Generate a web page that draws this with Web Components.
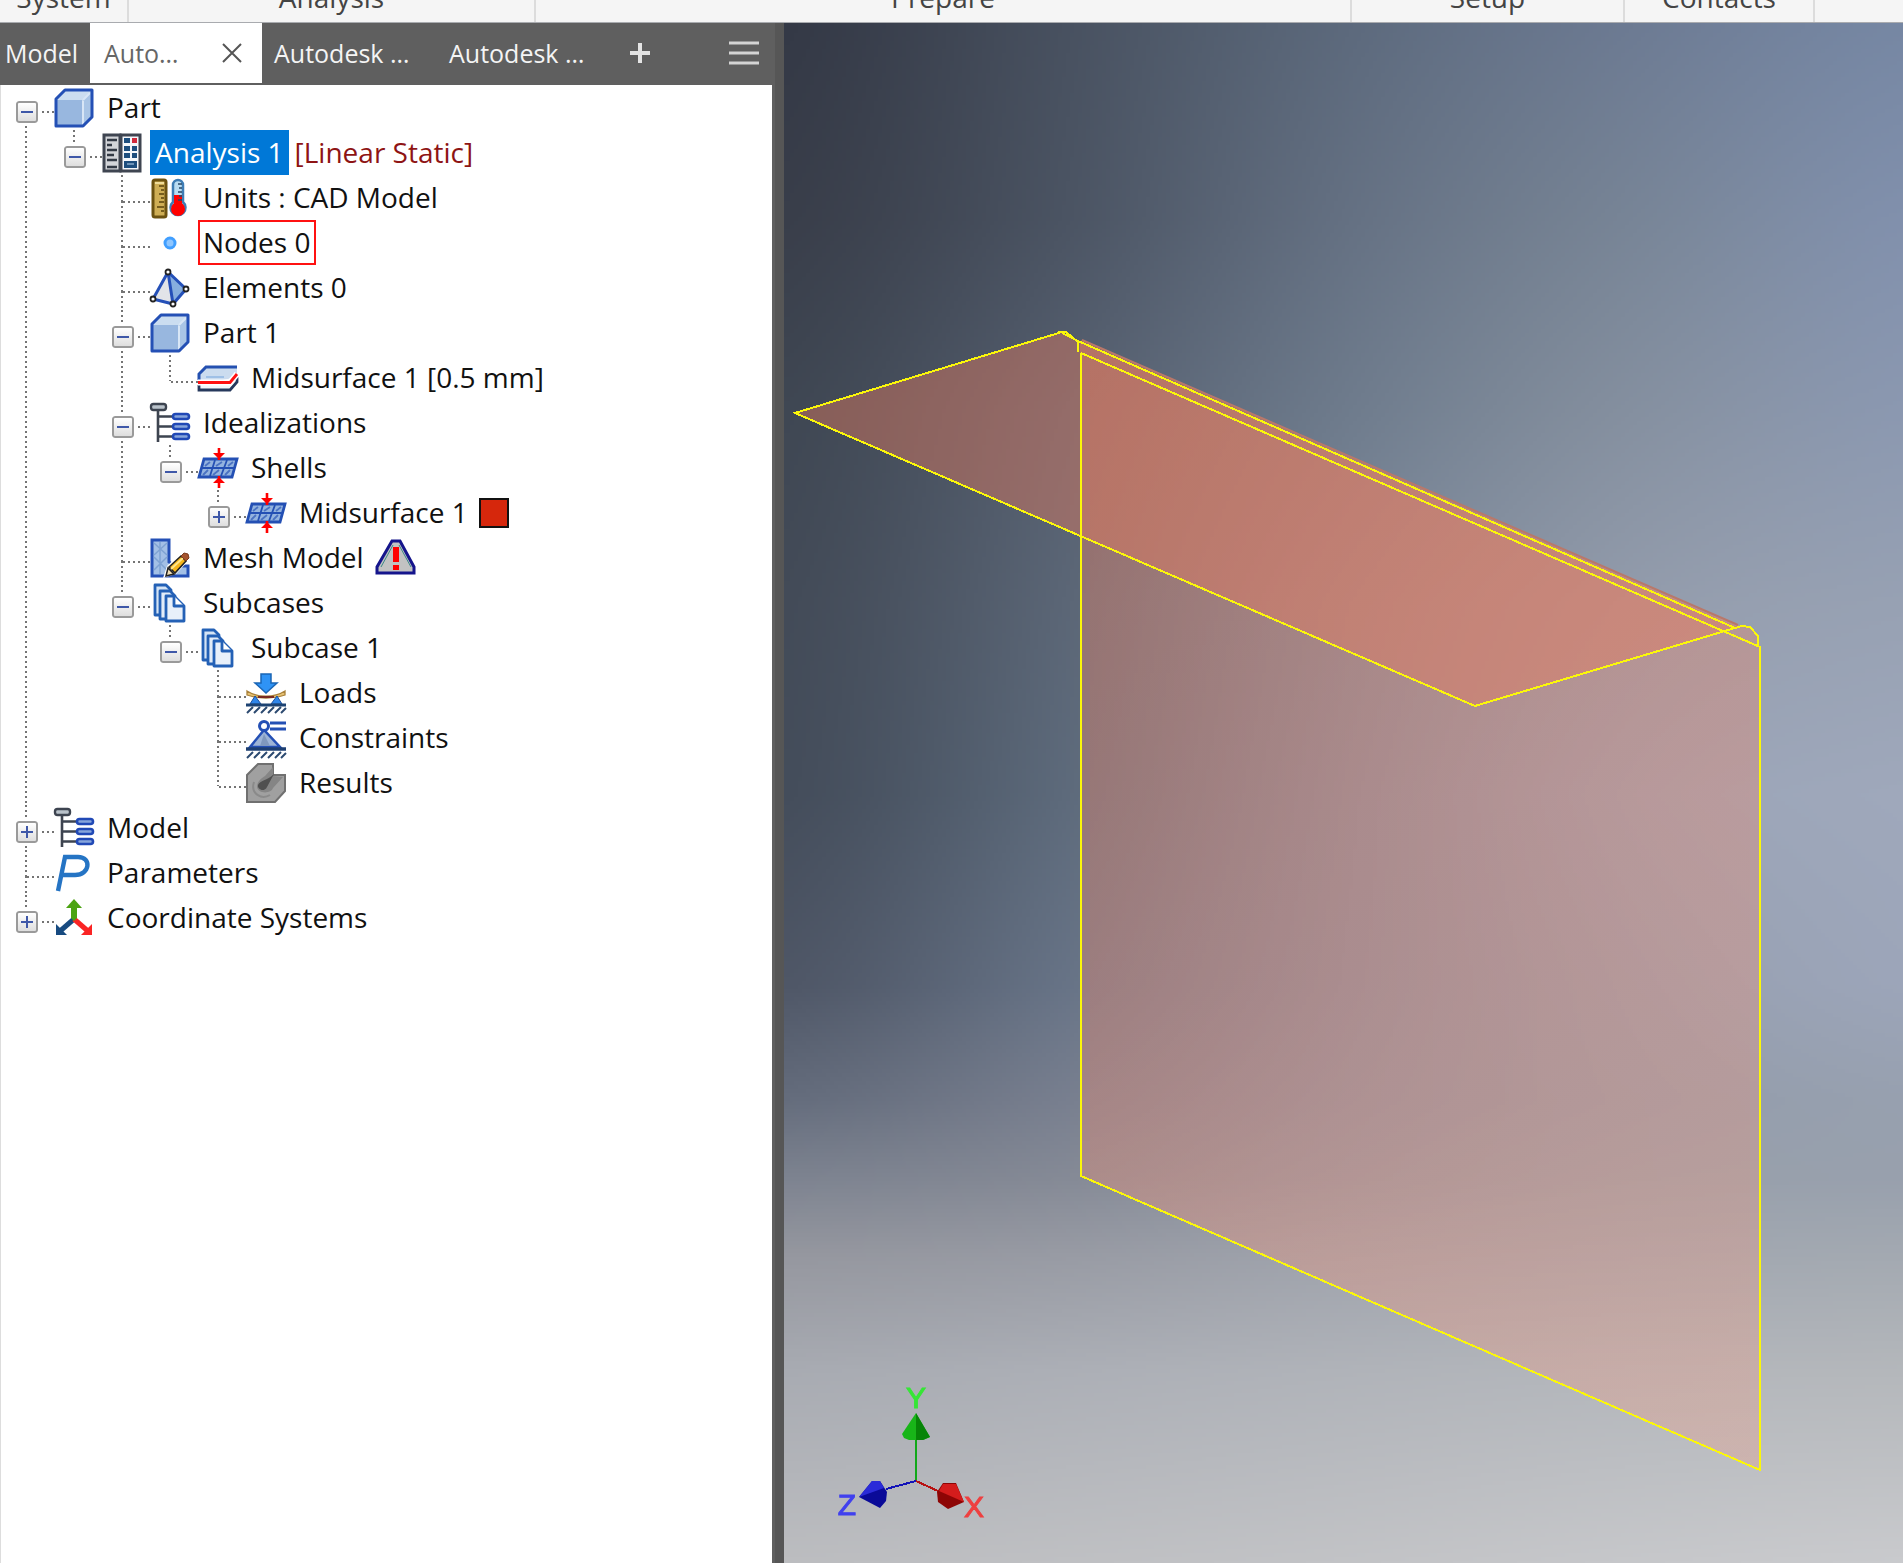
<!DOCTYPE html>
<html lang="en">
<head>
<meta charset="utf-8">
<title>Analysis browser</title>
<style>
  html, body { margin: 0; height: 100%; }
  body { font-family: "Open Sans", "Noto Sans", sans-serif; font-size: 28px; color: #111; background: #fff; overflow: hidden; }
</style>
</head>
<body>
<cad-app>
  <ribbon-strip slot="ribbon"></ribbon-strip>
  <browser-panel slot="panel">
    <tree-item icon="cube" label="Part" open first>
      <tree-item icon="analysis" label="Analysis 1" selected open>
        <span slot="extra" style="color:#8e1414">[Linear Static]</span>
        <tree-item icon="units" label="Units : CAD Model"></tree-item>
        <tree-item icon="node" label="Nodes 0" boxed></tree-item>
        <tree-item icon="tetra" label="Elements 0"></tree-item>
        <tree-item icon="cube" label="Part 1" open>
          <tree-item icon="midsurface" label="Midsurface 1 [0.5 mm]"></tree-item>
        </tree-item>
        <tree-item icon="list" label="Idealizations" open>
          <tree-item icon="shell" label="Shells" open>
            <tree-item icon="shell" label="Midsurface 1" closed>
              <color-chip slot="extra"></color-chip>
            </tree-item>
          </tree-item>
        </tree-item>
        <tree-item icon="mesh" label="Mesh Model">
          <cad-icon slot="extra" name="warning"></cad-icon>
        </tree-item>
        <tree-item icon="docs" label="Subcases" open>
          <tree-item icon="docs" label="Subcase 1" open>
            <tree-item icon="loads" label="Loads"></tree-item>
            <tree-item icon="constraints" label="Constraints"></tree-item>
            <tree-item icon="results" label="Results"></tree-item>
          </tree-item>
        </tree-item>
      </tree-item>
    </tree-item>
    <tree-item icon="list" label="Model" closed></tree-item>
    <tree-item icon="param" label="Parameters"></tree-item>
    <tree-item icon="axes" label="Coordinate Systems" closed></tree-item>
  </browser-panel>
  <model-view slot="view"></model-view>
</cad-app>

<script>
const ICONS = {
  cube: `<path d="M2 11 11 2H38V29L29 38H2Z" fill="#cbddf0"/><path d="M29 12 38 3V29L29 38Z" fill="#a9c5e6"/><path d="M3 12H28V38H3Z" fill="#98b7df"/><path d="M29 13V36M29 12 36 5" stroke="#d8e6f6" stroke-width="2"/><path d="M2 11 11 2H38V29L29 38H2Z" fill="none" stroke="#2450b5" stroke-width="3" stroke-linejoin="round"/>`,
  analysis: `<path d="M2 2H18V38H2Z" fill="#d3d5d9" stroke="#3f4551" stroke-width="3"/><path d="M19 2H38V38H19Z" fill="#f4f7fb" stroke="#3f4551" stroke-width="3"/><path d="M5 7H15M5 12H10M5 17H15M5 22H12M5 27H15M5 34H15" stroke="#333a45" stroke-width="2.5"/><path d="M22 5H28V10H22ZM22 13H28V18H22ZM30 13H35V18H30ZM22 20H28V25H22ZM30 20H35V25H30ZM22 28H35V35H22Z" fill="#1d4e7e"/><path d="M30 5H35V10H30Z" fill="#d02a3c"/><path d="M25 31H32" stroke="#6d93b8" stroke-width="2"/>`,
  units: `<rect x="3" y="2" width="13" height="37" rx="2" fill="#cfae55" stroke="#6c5211" stroke-width="3"/><path d="M5 5H14" stroke="#f0dc9a" stroke-width="2"/><path d="M9 8H14M11 12H14M9 16H14M11 20H14M9 24H14M7 29H14M11 33H14" stroke="#5a430c" stroke-width="1.5"/><path d="M23 7a5 5 0 0 1 10 0V24a7.500 7.500 0 1 1-10 0Z" fill="#b8dcf2" stroke="#3e7db5" stroke-width="2.500"/><circle cx="28" cy="31" r="7" fill="#f00"/><path d="M24 17H32V28H24Z" fill="#f00"/><path d="M28 6H32M29 10H32M28 14H32M29 18H32M28 22H32" stroke="#274566" stroke-width="1.500"/>`,
  node: `<circle cx="20" cy="20" r="5" fill="#8ec6ff" stroke="#419fff" stroke-width="3"/>`,
  tetra: `<path d="M18 4 3 31 23 36Z" fill="#e2e4e8"/><path d="M18 4 36 21 23 36Z" fill="#86aede"/><path d="M18 4 3 31 23 36 36 21Z M18 4 23 36" fill="none" stroke="#2550b8" stroke-width="3"/><g fill="#fff" stroke="#222" stroke-width="1.800"><circle cx="18" cy="4" r="2.500"/><circle cx="3" cy="31" r="2.500"/><circle cx="23" cy="36" r="2.500"/><circle cx="36" cy="21" r="2.500"/></g>`,
  midsurface: `<path d="M1 22V17L9 9H39V15L32 22Z" fill="#cbdcef"/><path d="M1 22V16L8 9H39" fill="none" stroke="#2450b0" stroke-width="3"/><path d="M8 19H26" stroke="#9fc0e6" stroke-width="2"/><path d="M1 27V32H32L39 24V19" fill="#f3f6fa" stroke="#26395c" stroke-width="2.800"/><path d="M0 24.500H32L39 16" fill="none" stroke="#fff" stroke-width="6"/><path d="M0 24.500H32L39 16" fill="none" stroke="#f11" stroke-width="2.800"/>`,
  list: `<path d="M8 6V39M8 13.500H24M8 23.500H24M8 33.500H24" stroke="#3d4450" stroke-width="2.600" fill="none"/><rect x="1" y="1" width="15" height="6" rx="2.500" fill="#b9c2ca" stroke="#3d4450" stroke-width="2.400"/><g fill="#86a5db" stroke="#2149b6" stroke-width="2.600"><rect x="23" y="11" width="16" height="5" rx="2.500"/><rect x="23" y="21" width="16" height="5" rx="2.500"/><rect x="23" y="31" width="16" height="5" rx="2.500"/></g>`,
  shell: `<path d="M6 11H39L34 29H1Z" fill="#93b3df" stroke="#2450b4" stroke-width="2.800"/><path d="M4 20H36M17 12 12 28M29 12 23 28" stroke="#2450b4" stroke-width="1.800"/><path d="M7 18 12 14M18 18 24 14M30 18 35 14M5 27 10 22M15 27 21 22M27 27 32 22" stroke="#4a72c2" stroke-width="1.800"/><path d="M21 0V12M21 40V28" stroke="#f00" stroke-width="2.600"/><path d="M15 5H27L21 11ZM15 35H27L21 29Z" fill="#f00"/>`,
  mesh: `<path d="M2 2H19V24L25 28H38V38H2Z" fill="#a3c0e6" stroke="#2450b6" stroke-width="3"/><path d="M4 5 17 17M17 5 4 17M4 19 17 32M17 19 4 32M10 4V36" stroke="#7fa3d3" stroke-width="1.500"/><path d="M13 40 17 28 33 13 41 20 26 36Z" fill="#fff"/><path d="M16 38 18 30 24 36Z" fill="#f2dfb5" stroke="#222" stroke-width="1.500"/><path d="M19 29 31 18 36 23 25 35Z" fill="#f5b51c" stroke="#222" stroke-width="1.600"/><path d="M21 31 33 20" stroke="#ffe58a" stroke-width="2"/><path d="M31 18 34 15 38 16 39 20 36 23Z" fill="#a5542e" stroke="#7a3a1c"/>`,
  docs: `<g stroke="#2461b6" stroke-width="2.800" stroke-linejoin="round"><path d="M5 2H16L21 7V32H5Z" fill="#d5e4f5"/><path d="M10 8H20L25 13V36H10Z" fill="#e2ecf8"/><path d="M16 13H24L34 23V38H16Z" fill="#e8f0fa"/><path d="M24 13V23H34" fill="#fff"/></g>`,
  warning: `<path d="M17 3H25L39 29V35H2V29Z" fill="#c2c2c2" stroke="#15158c" stroke-width="3"/><path d="M18 7 6 29M24 7 36 29" stroke="#3a8888" stroke-width="1"/><path d="M18 9H24V24H18ZM18 27H24V32H18Z" fill="#f00"/>`,
  loads: `<path d="M15 1H25V10H31L20 20 9 10H15Z" fill="#2f93f5" stroke="#1a65b5" stroke-width="1.500"/><path d="M1 18C12 25 28 25 39 18V22C28 26 12 26 1 22Z" fill="#e6c172" stroke="#a9813a" stroke-width="1.300"/><path d="M12 24H28" stroke="#7a2b22" stroke-width="2"/><path d="M4 31 9 23 15 31ZM25 31 31 23 36 31Z" fill="#2f86ea" stroke="#1a4f9d"/><path d="M0 32H40" stroke="#1d4372" stroke-width="3"/><path d="M1 40 7 34M8 40 14 34M15 40 21 34M22 40 28 34M29 40 35 34M35 40 40 35" stroke="#2c4a70" stroke-width="2"/>`,
  constraints: `<path d="M4 29 18 12 34 29Z" fill="#9db4d6" stroke="#2450b5" stroke-width="2.500"/><path d="M18 16 24 28H14Z" fill="#7f98bd"/><path d="M24 5H40M24 11H40" stroke="#2450b5" stroke-width="2.800"/><circle cx="18" cy="8" r="4.500" fill="#fff" stroke="#2450b5" stroke-width="3"/><path d="M0 31H40" stroke="#1d3f72" stroke-width="3.500"/><path d="M1 40 7 34M8 40 14 34M15 40 21 34M22 40 28 34M29 40 35 34M35 40 40 35" stroke="#2c4a70" stroke-width="2"/>`,
  results: `<path d="M1 12 12 1H27V12H39V28L29 39H1Z" fill="#a0a0a0" stroke="#707070" stroke-width="2"/><path d="M27 4V13L37 14 27 25C25 31 12 31 11 24C11 18 16 15 19 13Z" fill="#858585"/><path d="M28 11 21 24C18 30 11 26 12 22C14 17 21 18 28 11Z" fill="#505050"/><path d="M8 19C4 31 16 37 24 32" fill="none" stroke="#8a8a8a" stroke-width="2"/>`,
  param: `<path d="M4 38 11 4H24C38 4 36 22 21 22H8" fill="none" stroke="#2574c4" stroke-width="4.400"/>`,
  axes: `<path d="M20 21 5 34" stroke="#174a80" stroke-width="5"/><path d="M20 21 35 34" stroke="#fa2424" stroke-width="5"/><path d="M2 26V37H13Z" fill="#174a80"/><path d="M38 26V37H27Z" fill="#fa2424"/><path d="M17 9H23V20L20 23 17 20Z" fill="#4ba312"/><path d="M20 1 28 10H12Z" fill="#4ba312"/>`
};

class CadIcon extends HTMLElement {
  connectedCallback() {
    if (this.shadowRoot) return;
    this.attachShadow({ mode: "open" }).innerHTML = `
      <style>:host{display:block;width:40px;height:40px;flex:none}svg{display:block;overflow:visible}</style>
      <svg width="40" height="40" viewBox="0 0 40 40" fill="none" aria-hidden="true">${ICONS[this.getAttribute("name")]}</svg>`;
  }
}
customElements.define("cad-icon", CadIcon);

class ColorChip extends HTMLElement {
  constructor() {
    super();
    this.attachShadow({ mode: "open" }).innerHTML = `
      <style>:host{display:block;box-sizing:border-box;width:30px;height:30px;border:2px solid #111;background:#d6270c}</style>`;
  }
}
customElements.define("color-chip", ColorChip);

class TreeItem extends HTMLElement {
  connectedCallback() {
    if (this.shadowRoot) return;
    const branch = this.hasAttribute("open") || this.hasAttribute("closed");
    const open = this.hasAttribute("open");
    const label = this.getAttribute("label");
    this.attachShadow({ mode: "open" }).innerHTML = `
      <style>
        :host { display: flex; --dot: #747474; }
        .rail { flex: none; width: 48px; display: grid; grid-template-rows: 26px 1fr; grid-template-columns: 24px 24px; }
        .v { grid-column: 1; width: 2px; justify-self: end; background: repeating-linear-gradient(var(--dot) 0 2px, transparent 2px 5px); }
        .up { grid-row: 1; }
        .down { grid-row: 2; }
        :host([first]) .up, :host(:last-child) .down { visibility: hidden; }
        .h { grid-area: 2 / 2; height: 2px; margin-right: -3px; background: repeating-linear-gradient(90deg, var(--dot) 0 2px, transparent 2px 5px); }
        button { grid-area: 1 / 1 / 3 / 3; align-self: start; justify-self: center; box-sizing: border-box; width: 22px; height: 22px; margin: 16px 0 0; padding: 0;
          border: 2px solid #9a9a9a; border-radius: 3px; outline: 3px solid #fff; background: linear-gradient(#fff, #dedede); display: grid; place-items: center; }
        button svg { display: block; }
        .body { flex: 1; min-width: 0; }
        .row { display: flex; align-items: center; height: 45px; margin-left: 3px; line-height: 45px; white-space: nowrap; }
        .label { box-sizing: border-box; height: 45px; margin: 0 6px 0 8px; padding: 0 5px; }
        :host([selected]) .label { background: #0078d7; color: #fff; }
        :host([boxed]) .label { border: 2px solid #f11; padding: 0 4px 0 3px; line-height: 41px; }
      </style>
      <div class="rail">
        <span class="v up"></span><span class="v down"></span><span class="h"></span>
        ${branch ? `<button type="button" aria-expanded="${open}" aria-label="Toggle ${label}"><svg width="14" height="14"><path d="M1 7H13${open ? "" : "M7 1V13"}" stroke="#3f58a8" stroke-width="2"/></svg></button>` : ""}
      </div>
      <div class="body">
        <div class="row"><cad-icon name="${this.getAttribute("icon")}"></cad-icon><span class="label">${label}</span><slot name="extra"></slot></div>
        <slot></slot>
      </div>`;
  }
}
customElements.define("tree-item", TreeItem);

class RibbonStrip extends HTMLElement {
  constructor() {
    super();
    this.attachShadow({ mode: "open" }).innerHTML = `
      <style>
        :host { display: flex; box-sizing: border-box; height: 23px; overflow: hidden; align-items: flex-end; background: #f5f5f5; border-bottom: 1px solid #a9abaf; color: #444; }
        span { flex: none; box-sizing: border-box; height: 44px; line-height: 38px; text-align: center; border-right: 2px solid #dcdcdc; }
        .a { width: 129px; } .b { width: 407px; } .c { width: 816px; } .d { width: 273px; } .e { width: 190px; }
      </style>
      <span class="a">System</span><span class="b">Analysis</span><span class="c">Prepare</span><span class="d">Setup</span><span class="e">Contacts</span>`;
  }
}
customElements.define("ribbon-strip", RibbonStrip);

class BrowserPanel extends HTMLElement {
  constructor() {
    super();
    this.attachShadow({ mode: "open" }).innerHTML = `
      <style>
        :host { display: flex; flex-direction: column; box-sizing: border-box; height: 100%; background: #5f5f5f; border-right: 9px solid #565656; }
        .tabs { display: flex; height: 60px; flex: none; padding-bottom: 2px; }
        button { font: inherit; font-size: 25px; color: #f4f4f4; background: none; border: 0; margin: 0; padding: 0; text-align: left; white-space: nowrap; }
        .model { width: 90px; padding-left: 5px; }
        .active { display: flex; align-items: center; width: 172px; background: #fff; }
        .active button { color: #666; }
        .active .name { flex: 1; padding-left: 14px; }
        .active .close { width: 20px; height: 20px; margin-right: 20px; }
        .doc { width: 175px; padding-left: 12px; }
        .add { width: 56px; display: grid; place-items: center; }
        .menu { margin-left: auto; margin-right: 16px; display: grid; place-items: center; }
        svg { display: block; }
        .tree { flex: 1; margin-right: 3px; padding-left: 2px; background: #fff; border-left: 1px solid #ddd; overflow: hidden; }
      </style>
      <div class="tabs" role="tablist">
        <button type="button" role="tab" class="model">Model</button>
        <div class="active"><button type="button" role="tab" aria-selected="true" class="name">Auto…</button><button type="button" class="close" aria-label="Close"><svg width="20" height="20"><path d="M1 1 19 19M19 1 1 19" stroke="#555" stroke-width="2"/></svg></button></div>
        <button type="button" role="tab" class="doc">Autodesk …</button>
        <button type="button" role="tab" class="doc">Autodesk …</button>
        <button type="button" class="add" aria-label="Add"><svg width="20" height="20"><path d="M0 10H20M10 0V20" stroke="#e4e4e4" stroke-width="4"/></svg></button>
        <button type="button" class="menu" aria-label="Menu"><svg width="30" height="26"><path d="M0 3H30M0 13H30M0 23H30" stroke="#d4d4d4" stroke-width="3"/></svg></button>
      </div>
      <div class="tree"><slot></slot></div>`;
  }
}
customElements.define("browser-panel", BrowserPanel);

class ModelView extends HTMLElement {
  constructor() {
    super();
    this.attachShadow({ mode: "open" }).innerHTML = `
      <style>
        :host { display: grid; height: 100%; overflow: hidden; }
        canvas, svg { grid-area: 1 / 1; width: 100%; height: 100%; min-width: 0; min-height: 0; display: block; }
        text { font-family: "Liberation Sans", sans-serif; font-size: 30px; }
      </style>
      <canvas width="280" height="385"></canvas>
      <svg viewBox="784 23 1119 1540" preserveAspectRatio="xMinYMin slice" fill="none">
        <defs><linearGradient id="face" gradientUnits="userSpaceOnUse" x1="1080" y1="400" x2="1700" y2="1450"><stop offset="0" stop-color="#de7f66"/><stop offset=".5" stop-color="#de8c78"/><stop offset="1" stop-color="#e0a595"/></linearGradient></defs>
        <path d="M1080 341 1083 340 1740 626 1750 628 1759 637 1760 647V1470L1080 1176Z" fill="url(#face)" fill-opacity=".44"/>
        <path d="M795 413 1062 332 1080 341 1738 627 1475 706Z" fill="rgba(228,124,96,.44)"/>
        <path d="M1082 340 1738 625" stroke="#b9786a" stroke-width="2"/>
        <g stroke="#fbf70a" stroke-width="2" shape-rendering="crispEdges">
          <path d="M1062 332 795 413 1475 706 1735 628 1742 626 1750 627 1758 636V647"/>
          <path d="M1058 332H1066L1078 342V352M1062 333 1074 339"/>
          <path d="M1078 341 1735 628M1081 353 1760 647V1470L1081 1176V353"/>
        </g>
        <g stroke-width="2" shape-rendering="crispEdges">
          <path d="M916 1481V1440" stroke="#12a81a"/><path d="M916 1481 886 1489" stroke="#1212b8"/><path d="M916 1481 938 1491" stroke="#b81212"/>
        </g>
        <path d="M916 1413 902 1434 904 1438 909 1440H923L930 1437Z" fill="#18b518"/><path d="M916 1413V1440H923L930 1437Z" fill="#078407"/>
        <path d="M859 1497 872 1481 880 1481 887 1492 886 1501 880 1508Z" fill="#0a0a98"/><path d="M859 1497 872 1481 880 1481 884 1488Z" fill="#2b2bd8"/>
        <path d="M964 1502 956 1483 943 1483 937 1492 938 1502 948 1509Z" fill="#8d0505"/><path d="M964 1502 956 1484 943 1484 939 1491Z" fill="#d41c1c"/>
        <g text-anchor="middle" stroke-width="1">
          <text x="916" y="1408" fill="#36e636" stroke="#36e636">Y</text>
          <text x="847" y="1515" fill="#4040ee" stroke="#4040ee">Z</text>
          <text x="974" y="1517" fill="#ee4040" stroke="#ee4040">X</text>
        </g>
      </svg>`;
    this.paint(this.shadowRoot.querySelector("canvas"));
  }
  /* Studio backdrop: colour samples on a 5-column grid, interpolated smoothly. */
  paint(canvas) {
    const rows = [
      [0, "343946 485160 5c697c 6c7a92 7687a3"],
      [.125, "393e4a 4b5463 647082 778496 8190ac"],
      [.25, "3f4753 566070 6e7b8c 848f9f 8b98b0"],
      [.375, "434b58 5b6676 7b8798 929bab 97a1b3"],
      [.5, "444d5b 5d6a7b 808b9e 98a2b5 9fa8bb"],
      [.625, "4f5767 677386 828da0 949dae 9ca5b9"],
      [.7, "656d7d 787f8f 8891a2 929baa 97a0af"],
      [.75, "7d8390 858a96 9097a4 979faa 98a0ad"],
      [.8, "95979f 989ba4 9fa3ac a1a7b0 a3a9b1"],
      [.875, "a8abb2 acafb6 b0b3b9 b3b6bb b4b7bb"],
      [1, "bcbdc0 bfc0c3 c2c3c6 c6c7ca c9cacd"]
    ].map(([y, s]) => [y, s.split(" ").map(h => [0, 2, 4].map(i => parseInt(h.substr(i, 2), 16)))]);
    const w = canvas.width, h = canvas.height, ctx = canvas.getContext("2d"), img = ctx.createImageData(w, h);
    const cubic = (a, b, c, d, t) => b + .5 * t * (c - a + t * (2 * a - 5 * b + 4 * c - d + t * (3 * (b - c) + d - a)));
    for (let y = 0; y < h; y++) {
      const v = y / (h - 1);
      let r = 0;
      while (r < rows.length - 2 && v > rows[r + 1][0]) r++;
      const t = (v - rows[r][0]) / (rows[r + 1][0] - rows[r][0]);
      for (let x = 0; x < w; x++) {
        const u = x / (w - 1) * 4, c = Math.min(3, Math.floor(u)), f = u - c;
        for (let k = 0; k < 3; k++) {
          const at = j => { const q = rows[j][1]; return cubic(q[Math.max(0, c - 1)][k], q[c][k], q[c + 1][k], q[Math.min(4, c + 2)][k], f); };
          img.data[(y * w + x) * 4 + k] = at(r) * (1 - t) + at(r + 1) * t;
        }
        img.data[(y * w + x) * 4 + 3] = 255;
      }
    }
    ctx.putImageData(img, 0, 0);
  }
}
customElements.define("model-view", ModelView);

class CadApp extends HTMLElement {
  constructor() {
    super();
    this.attachShadow({ mode: "open" }).innerHTML = `
      <style>
        :host { display: grid; height: 100vh; grid-template: auto minmax(0, 1fr) / 784px minmax(0, 1fr); }
        slot[name=ribbon] { display: block; grid-column: 1 / 3; min-width: 0; overflow: hidden; }
        slot[name=panel], slot[name=view] { display: block; min-width: 0; min-height: 0; }
      </style>
      <slot name="ribbon"></slot><slot name="panel"></slot><slot name="view"></slot>`;
  }
}
customElements.define("cad-app", CadApp);
</script>
</body>
</html>
